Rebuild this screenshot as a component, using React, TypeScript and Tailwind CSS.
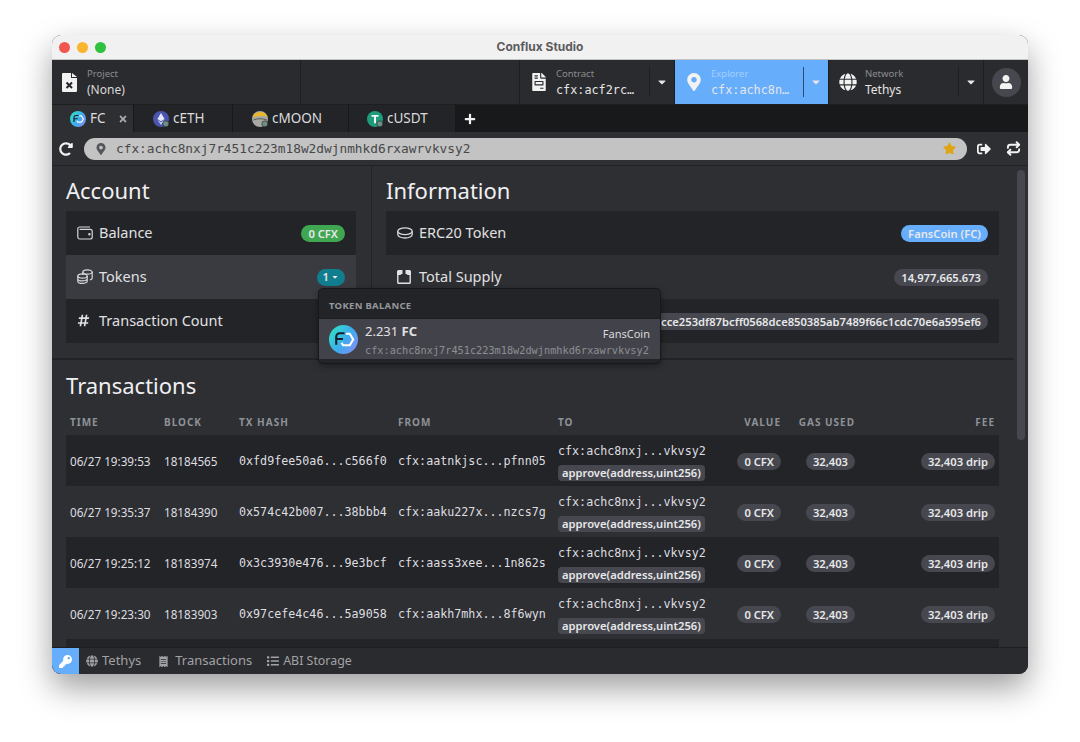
import React from "react";
import {
  FaCaretDown,
  FaFileInvoice,
  FaGlobe,
  FaHashtag,
  FaKey,
  FaList,
  FaMapMarkerAlt,
  FaPlus,
  FaReceipt,
  FaRedoAlt,
  FaSignOutAlt,
  FaStar,
  FaTimes,
  FaUser,
} from "react-icons/fa";
import { Repeat } from "lucide-react";

const txs = [
  { time: "06/27 19:39:53", block: "18184565", hash: "0xfd9fee50a6...c566f0", from: "cfx:aatnkjsc...pfnn05" },
  { time: "06/27 19:35:37", block: "18184390", hash: "0x574c42b007...38bbb4", from: "cfx:aaku227x...nzcs7g" },
  { time: "06/27 19:25:12", block: "18183974", hash: "0x3c3930e476...9e3bcf", from: "cfx:aass3xee...1n862s" },
  { time: "06/27 19:23:30", block: "18183903", hash: "0x97cefe4c46...5a9058", from: "cfx:aakh7mhx...8f6wyn" },
];

function Pill({ children, className = "bg-[#47484f]" }: { children: React.ReactNode; className?: string }) {
  return (
    <span className={`inline-block h-[17px] rounded-full px-[7px] text-[11.2px] font-semibold leading-[17px] whitespace-nowrap text-[#e8e8ea] ${className}`}>
      {children}
    </span>
  );
}

function FileX() {
  return (
    <svg width="15" height="19" viewBox="0 0 15 19">
      <path d="M1 0h8v5h6v13a1 1 0 0 1-1 1H1a1 1 0 0 1-1-1V1a1 1 0 0 1 1-1z" fill="#f2f2f2" />
      <path d="M10 0l5 4h-5z" fill="#f2f2f2" />
      <path d="M4.5 9.5l5.5 5.5M10 9.5l-5.5 5.5" stroke="#26272a" strokeWidth="2" />
    </svg>
  );
}

function WalletIcon() {
  return (
    <svg width="16" height="14" viewBox="0 0 16 14" fill="none" stroke="#d8d8da" strokeWidth="1.2">
      <path d="M2.5 1h10.5M2.5 1A1.8 1.8 0 0 0 .8 2.8v8.4A2 2 0 0 0 2.8 13h10.6a1.8 1.8 0 0 0 1.8-1.8V5.2a1.8 1.8 0 0 0-1.8-1.8H2.6" />
      <circle cx="12.4" cy="8.2" r=".6" fill="#d8d8da" />
    </svg>
  );
}

function CoinsIcon() {
  return (
    <svg width="16" height="15" viewBox="0 0 16 15" fill="none" stroke="#d8d8da" strokeWidth="1.2">
      <ellipse cx="10.5" cy="3" rx="4.7" ry="2.2" />
      <path d="M5.8 3v3M15.2 3v6c0 1-1 1.7-2.4 2" />
      <ellipse cx="5.5" cy="7" rx="4.7" ry="2.2" />
      <path d="M.8 7v5.2c0 1.2 2.1 2.2 4.7 2.2s4.7-1 4.7-2.2V7M.8 9.7c0 1.2 2.1 2.2 4.7 2.2s4.7-1 4.7-2.2" />
    </svg>
  );
}

function CoinIcon() {
  return (
    <svg width="16" height="12" viewBox="0 0 16 12" fill="none" stroke="#d8d8da" strokeWidth="1.3">
      <ellipse cx="8" cy="4.2" rx="7.2" ry="3.4" />
      <path d="M.8 4.2v3.4c0 1.9 3.2 3.4 7.2 3.4s7.2-1.5 7.2-3.4V4.2" />
    </svg>
  );
}

function BoxIcon() {
  return (
    <svg width="14" height="14" viewBox="0 0 14 14">
      <path d="M1.5 0h11A1.5 1.5 0 0 1 14 1.5V5H0V1.5A1.5 1.5 0 0 1 1.5 0z" fill="#e2e2e4" />
      <path d="M.8 5v7.5A.8.8 0 0 0 1.6 13.3h10.8a.8.8 0 0 0 .8-.8V5" fill="none" stroke="#e2e2e4" strokeWidth="1.4" />
      <path d="M5.5 0h3v4h2L7 7.5 3.5 4h2z" fill="#2e2f33" />
    </svg>
  );
}

function FcLogo({ size, id }: { size: number; id: string }) {
  return (
    <svg width={size} height={size} viewBox="0 0 30 30">
      <defs>
        <linearGradient id={id} x1="0" y1="0.2" x2="1" y2="0.9">
          <stop offset="0" stopColor="#2fe0c8" />
          <stop offset="0.55" stopColor="#40a8ef" />
          <stop offset="1" stopColor="#8d8cf5" />
        </linearGradient>
      </defs>
      <circle cx="15" cy="15" r="15" fill={`url(#${id})`} />
      <path d="M16 8.5h-5a3.5 3.5 0 0 0-3.5 3.5v8.5M8 14.5h6.5" fill="none" stroke="#17202a" strokeWidth="2.2" />
      <path d="M17.5 9h4l3.5 6-3.5 6h-7l-1.5-2.6" fill="none" stroke="#fff" strokeWidth="2.2" />
    </svg>
  );
}

function TokenBadge() {
  return <circle cx="12.8" cy="12.8" r="3" fill="#6f8f86" stroke="#26272a" strokeWidth=".6" />;
}

function EthLogo() {
  return (
    <svg width="16" height="16" viewBox="0 0 16 16">
      <circle cx="8" cy="8" r="8" fill="#4b55ae" />
      <path d="M8 2l3.6 6L8 10.2 4.4 8z" fill="#e4e6fb" />
      <path d="M4.4 9L8 11.2 11.6 9 8 14z" fill="#c3c8f2" />
      <TokenBadge />
    </svg>
  );
}

function MoonLogo() {
  return (
    <svg width="16" height="16" viewBox="0 0 16 16">
      <circle cx="8" cy="8" r="8" fill="#a7a9a4" />
      <path d="M0.5 6.5A8 8 0 0 1 15.6 6C12 4.6 5 4.8.5 6.5z" fill="#e9b52c" />
      <path d="M1.5 9C5 7.2 11 7.4 15 9" fill="none" stroke="#5a5a55" strokeWidth="1" />
      <TokenBadge />
    </svg>
  );
}

function UsdtLogo() {
  return (
    <svg width="16" height="16" viewBox="0 0 16 16">
      <circle cx="8" cy="8" r="8" fill="#1e9c7c" />
      <path d="M4.5 4h7v1.8H9v6.4H7V5.8H4.5z" fill="#f2f7f5" />
      <TokenBadge />
    </svg>
  );
}

function TopItem({
  icon,
  label,
  value,
  mono,
  active,
  width,
}: {
  icon: React.ReactNode;
  label: string;
  value: string;
  mono?: boolean;
  active?: boolean;
  width: string;
}) {
  return (
    <div className={`flex h-full shrink-0 items-center border-r border-[#1d1e20] ${width} ${active ? "bg-[#66adfc]" : ""}`}>
      <div className="flex w-[36px] shrink-0 justify-center pl-[2px] text-[#f2f2f2]">{icon}</div>
      <div className="min-w-0 flex-1 pt-[1px]">
        <div className={`text-[9.5px] leading-[14px] ${active ? "text-[#a5cfff]" : "text-[#8b8c90]"}`}>{label}</div>
        <div className={`text-[#e6e6e8] leading-[18px] ${mono ? "font-['DejaVu_Sans_Mono',monospace] text-[11.8px] whitespace-nowrap" : "text-[12px]"}`}>
          {value}
        </div>
      </div>
      <div className={`h-[30px] w-px shrink-0 ${active ? "bg-[#2c4a6e]" : "bg-[#1d1e20]"}`} />
      <div className="flex w-[24px] shrink-0 justify-center text-[#e6e6e8]">
        <FaCaretDown size={12} />
      </div>
    </div>
  );
}

function Tab({ icon, label, width, pad, active }: { icon: React.ReactNode; label: string; width: string; pad: string; active?: boolean }) {
  return (
    <div className={`flex h-full shrink-0 items-center border-r border-[#17181a] text-[13.5px] text-[#dcdcde] ${width} ${pad} ${active ? "bg-[#2e2f33]" : "bg-[#232427]"}`}>
      {icon}
      <span className="ml-[4px]">{label}</span>
      {active && <FaTimes size={10} className="ml-[12px] text-[#a9aaad]" />}
    </div>
  );
}

function InfoRow({ icon, label, right, dark, hover }: { icon?: React.ReactNode; label?: string; right?: React.ReactNode; dark?: boolean; hover?: boolean }) {
  return (
    <div className={`flex h-[44px] items-center justify-between pl-[11px] pr-[11px] ${dark ? "bg-[#232427]" : ""} ${hover ? "bg-[#3a3b40]" : ""}`}>
      <div className="flex items-center pb-[1px] text-[14.5px] text-[#e0e0e2]">
        <span className="flex w-[22px] shrink-0 justify-start">{icon}</span>
        {label}
      </div>
      {right}
    </div>
  );
}

const tableCols = "grid grid-cols-[94px_75px_159px_160px_168px_55px_74px_140px] px-[4px]";

function Table() {
  return (
    <div className="ml-[14px] mr-[29px]">
      <div className={`${tableCols} h-[24px] items-center pb-[1px] text-[10px] font-bold tracking-[1px] text-[#8d9298]`}>
        <div>TIME</div>
        <div>BLOCK</div>
        <div>TX HASH</div>
        <div>FROM</div>
        <div>TO</div>
        <div className="text-right">VALUE</div>
        <div className="text-right">GAS USED</div>
        <div className="text-right">FEE</div>
      </div>
      {txs.map((tx, i) => (
        <div key={tx.hash} className={`${tableCols} h-[51px] items-center pt-[2px] text-[11.7px] text-[#dedee0] ${i % 2 === 0 ? "bg-[#232427]" : ""}`}>
          <div>{tx.time}</div>
          <div>{tx.block}</div>
          <div className="font-['DejaVu_Sans_Mono',monospace]">{tx.hash}</div>
          <div className="font-['DejaVu_Sans_Mono',monospace]">{tx.from}</div>
          <div className="flex flex-col items-start">
            <span className="font-['DejaVu_Sans_Mono',monospace] leading-[18px]">cfx:achc8nxj...vkvsy2</span>
            <span className="mt-[5px] rounded-[4px] bg-[#47484f] px-[4px] text-[11.2px] font-semibold leading-[16px] whitespace-nowrap text-[#e8e8ea]">
              approve(address,uint256)
            </span>
          </div>
          <div className="text-right">
            <Pill>0 CFX</Pill>
          </div>
          <div className="text-right">
            <Pill>32,403</Pill>
          </div>
          <div className="text-right">
            <Pill>32,403 drip</Pill>
          </div>
        </div>
      ))}
      {/* next row, cut off by the status bar */}
      <div className="h-[51px] bg-[#232427]" />
    </div>
  );
}

export default function App() {
  return (
    <div className="h-[742px] w-[1080px] overflow-hidden bg-white pl-[52px] pt-[35px] font-['Noto_Sans',sans-serif]">
      <div className="flex h-[639px] w-[976px] flex-col overflow-hidden rounded-[9px] bg-[#2e2f33] shadow-[0_14px_32px_rgba(0,0,0,0.38)]">
        {/* title bar */}
        <div className="relative flex h-[25px] shrink-0 items-center justify-center border-b border-[#c4c4c4] bg-[#f2f1f1]">
          <div className="absolute left-[7px] flex gap-[7px]">
            <span className="h-[11px] w-[11px] rounded-full bg-[#f2574f]" />
            <span className="h-[11px] w-[11px] rounded-full bg-[#f9b52e]" />
            <span className="h-[11px] w-[11px] rounded-full bg-[#2fc140]" />
          </div>
          <span className="text-[12px] font-bold text-[#5b5b5d] font-['Inter',sans-serif]">Conflux Studio</span>
        </div>

        {/* top bar */}
        <div className="flex h-[44px] shrink-0 bg-[#2a2b2e]">
          <div className="flex h-full w-[249px] shrink-0 items-center border-r border-[#1d1e20]">
            <div className="flex w-[35px] shrink-0 justify-center">
              <FileX />
            </div>
            <div className="pt-[1px]">
              <div className="text-[9.5px] leading-[14px] text-[#8b8c90]">Project</div>
              <div className="text-[12px] leading-[18px] text-[#d9d9db]">(None)</div>
            </div>
          </div>
          <div className="h-full flex-1 border-r border-[#1d1e20]" />
          <TopItem width="w-[155px]" icon={<FaFileInvoice size={18} />} label="Contract" value="cfx:acf2rc…" mono />
          <TopItem width="w-[154px]" icon={<FaMapMarkerAlt size={18} />} label="Explorer" value="cfx:achc8n…" mono active />
          <TopItem width="w-[155px]" icon={<FaGlobe size={18} />} label="Network" value="Tethys" />
          <div className="flex h-full w-[44px] shrink-0 items-center justify-center">
            <div className="flex h-[29px] w-[29px] items-center justify-center rounded-full bg-[#47484f] text-[#f2f2f2]">
              <FaUser size={14} />
            </div>
          </div>
        </div>

        {/* tabs */}
        <div className="flex h-[28px] shrink-0 border-t border-[#1d1e20] bg-[#18191b]">
          <Tab width="w-[82px]" pad="pl-[18px]" active icon={<FcLogo size={16} id="fc-tab" />} label="FC" />
          <Tab width="w-[99px]" pad="pl-[19px]" icon={<EthLogo />} label="cETH" />
          <Tab width="w-[116px]" pad="pl-[19px]" icon={<MoonLogo />} label="cMOON" />
          <Tab width="w-[107px]" pad="pl-[18px]" icon={<UsdtLogo />} label="cUSDT" />
          <div className="flex w-[27px] items-center justify-center text-[#f2f2f2]">
            <FaPlus size={12} />
          </div>
        </div>

        {/* address bar */}
        <div className="flex h-[34px] shrink-0 items-center border-b border-[#222326] bg-[#2e2f33] text-[#f2f2f2]">
          <div className="flex w-[32px] justify-center pr-[4px]">
            <FaRedoAlt size={14} />
          </div>
          <div className="flex h-[22px] w-[883px] shrink-0 items-center rounded-full bg-[#c2c3c2] pl-[11px] pr-[11px]">
            <FaMapMarkerAlt size={12} className="text-[#55565a]" />
            <span className="ml-[9px] flex-1 font-['DejaVu_Sans_Mono',monospace] text-[12.8px] text-[#47484a]">
              cfx:achc8nxj7r451c223m18w2dwjnmhkd6rxawrvkvsy2
            </span>
            <FaStar size={13} className="text-[#e0a412]" />
          </div>
          <div className="flex flex-1 items-center pl-[10px]">
            <FaSignOutAlt size={14} />
            <Repeat size={15} strokeWidth={3} className="ml-[15px]" />
          </div>
        </div>

        {/* content */}
        <div className="relative min-h-0 flex-1 overflow-hidden">
          <div className="mr-[14px] flex h-[194px] border-b-2 border-[#222326]">
            <div className="w-[320px] shrink-0 border-r border-[#222326] pl-[14px] pr-[15px]">
              <h2 className="h-[45px] pt-[5px] text-[22px] leading-[38px] text-[#f0f0f2]">Account</h2>
              <InfoRow dark icon={<WalletIcon />} label="Balance" right={<Pill className="bg-[#3fa651]">0 CFX</Pill>} />
              <InfoRow
                hover
                icon={<CoinsIcon />}
                label="Tokens"
                right={
                  <span className="flex h-[17px] items-center gap-[2px] rounded-full bg-[#117e8f] px-[6px] text-[11.2px] font-semibold text-[#e8e8ea]">
                    1 <FaCaretDown size={8} />
                  </span>
                }
              />
              <InfoRow dark icon={<FaHashtag size={13} className="text-[#e2e2e4]" />} label="Transaction Count" />
            </div>
            <div className="min-w-0 flex-1 pl-[14px] pr-[15px]">
              <h2 className="h-[45px] pt-[5px] text-[22px] leading-[38px] text-[#f0f0f2]">Information</h2>
              <InfoRow dark icon={<CoinIcon />} label="ERC20 Token" right={<Pill className="bg-[#66adfc]">FansCoin (FC)</Pill>} />
              <InfoRow icon={<BoxIcon />} label="Total Supply" right={<Pill>14,977,665.673</Pill>} />
              <InfoRow dark right={<Pill>7cce253df87bcff0568dce850385ab7489f66c1cdc70e6a595ef6</Pill>} />
            </div>
          </div>

          <h2 className="h-[51px] pl-[14px] pt-[6px] text-[22px] leading-[38px] text-[#f0f0f2]">Transactions</h2>
          <Table />

          {/* token balance dropdown */}
          <div className="absolute left-[266px] top-[122px] h-[76px] w-[343px] overflow-hidden rounded-[5px] border border-[#17181a] bg-[#232427] shadow-[0_2px_6px_rgba(0,0,0,0.35)]">
            <div className="flex h-[30px] items-center border-b border-[#1d1e20] pl-[10px] pt-[5px] text-[9.5px] font-bold tracking-[0.3px] text-[#96989c]">
              TOKEN BALANCE
            </div>
            <div className="flex h-[40px] items-center bg-[#42434a] pl-[10px] pr-[10px]">
              <FcLogo size={29} id="fc-menu" />
              <div className="ml-[7px] min-w-0 flex-1 pt-[2px]">
                <div className="flex items-center justify-between leading-[17px]">
                  <span className="text-[13px] text-[#e0e0e2]">
                    2.231 <b className="font-bold">FC</b>
                  </span>
                  <span className="mt-[3px] text-[11px] text-[#d9d9db]">FansCoin</span>
                </div>
                <div className="font-['DejaVu_Sans_Mono',monospace] text-[10.25px] leading-[17px] whitespace-nowrap text-[#8d8e93]">
                  cfx:achc8nxj7r451c223m18w2dwjnmhkd6rxawrvkvsy2
                </div>
              </div>
            </div>
          </div>

          {/* scrollbar */}
          <div className="absolute right-[3px] top-[4px] h-[270px] w-[8px] rounded-full bg-[#47484f]" />
        </div>

        {/* status bar */}
        <div className="flex h-[27px] shrink-0 items-center border-t border-[#1d1e20] bg-[#2a2b2e] text-[13px] text-[#a1a2a6]">
          <div className="flex h-full w-[27px] items-center justify-center bg-[#66adfc] text-white">
            <FaKey size={13} />
          </div>
          <div className="ml-[7px] flex items-center gap-[4px]">
            <FaGlobe size={12} />
            Tethys
          </div>
          <div className="ml-[17px] flex items-center gap-[6px]">
            <FaReceipt size={11} />
            Transactions
          </div>
          <div className="ml-[15px] flex items-center gap-[4px]">
            <FaList size={12} />
            <span className="text-[12.4px]">ABI Storage</span>
          </div>
        </div>
      </div>
    </div>
  );
}
